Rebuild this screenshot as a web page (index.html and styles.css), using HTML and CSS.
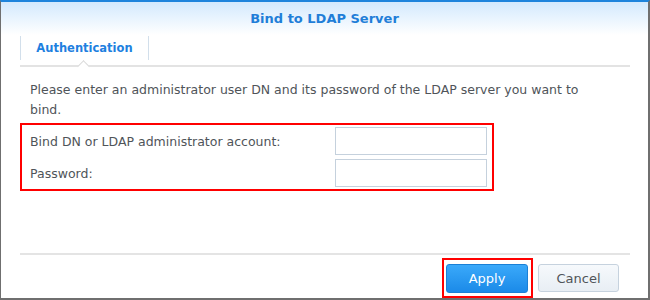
FILE: index.html
```html
<!DOCTYPE html>
<html lang="en">
<head>
    <meta charset="UTF-8">
    <meta name="viewport" content="width=device-width, initial-scale=1.0">
    <title>Bind to LDAP Server</title>
    <link rel="stylesheet" href="styles.css">
</head>
<body>
    <div class="dialog">
        <header class="dialog-header">
            <h1>Bind to LDAP Server</h1>
        </header>

        <div class="tabs">
            <div class="tab active">Authentication</div>
        </div>

        <div class="content">
            <p class="intro">Please enter an administrator user DN and its password of the LDAP server you want to bind.</p>

            <div class="fields highlight">
                <label for="binddn">Bind DN or LDAP administrator account:</label>
                <input type="text" id="binddn" name="binddn">
                <label for="password">Password:</label>
                <input type="password" id="password" name="password">
            </div>
        </div>

        <footer class="dialog-footer">
            <div class="highlight apply-wrap">
                <button type="button" class="btn btn-primary">Apply</button>
            </div>
            <button type="button" class="btn">Cancel</button>
        </footer>
    </div>
</body>
</html>
```

FILE: styles.css
```css
* {
    margin: 0;
    padding: 0;
    box-sizing: border-box;
    font-family: "DejaVu Sans", Verdana, sans-serif;
}

body {
    background-color: #fff;
    color: #4f5459;
}

.dialog {
    width: 650px;
    height: 300px;
    display: flex;
    flex-direction: column;
    border-top: 2px solid #1e84dc;
    border-left: 1px solid #6f6f6f;
    border-right: 2px solid #6f6f6f;
    border-bottom: 2px solid #6f6f6f;
    background-color: #fff;
}

.dialog-header {
    height: 33px;
    background: linear-gradient(to bottom, #d3e9fd, #ffffff);
    text-align: center;
}

.dialog-header h1 {
    font-size: 13px;
    font-weight: bold;
    color: #1f7ed8;
    line-height: 34px;
}

.tabs {
    display: flex;
    margin: 0 18px 0 19px;
    padding-top: 1px;
    border-bottom: 2px solid #e3e3e3;
    height: 32px;
}

.tab {
    position: relative;
    width: 129px;
    height: 24px;
    border-left: 1px solid #d2dfeb;
    border-right: 1px solid #d2dfeb;
    font-size: 11.5px;
    font-weight: bold;
    color: #1e80df;
    text-align: center;
    line-height: 24px;
}

/* little notch under the active tab */
.tab.active::after {
    content: "";
    position: absolute;
    left: 58px;
    bottom: -11px;
    width: 8px;
    height: 8px;
    background-color: #fff;
    border-top: 1px solid #d8d8d8;
    border-left: 1px solid #d8d8d8;
    transform: rotate(45deg);
}

.content {
    padding: 13px 18px 0 29px;
}

.intro {
    max-width: 580px;
    font-size: 12.5px;
    line-height: 20px;
    color: #4f5459;
}

.highlight {
    border: 2px solid #f00;
}

.fields {
    display: grid;
    grid-template-columns: 305px 152px;
    row-gap: 4px;
    align-items: center;
    width: fit-content;
    margin: 3px 0 0 -10px;
    padding: 2px 5px 2px 8px;
}

.fields label {
    font-size: 12.5px;
    color: #4f5459;
}

.fields input {
    height: 28px;
    border: 1px solid #c5d1dd;
    background-color: #fff;
    padding: 0 6px;
    font-size: 12px;
}

.dialog-footer {
    margin: auto 18px 0 19px;
    border-top: 2px solid #e4e4e4;
    display: flex;
    justify-content: flex-end;
    align-items: center;
    gap: 5px;
    padding: 3px 11px 0 0;
    height: 45px;
}

.apply-wrap {
    padding: 4px 3px 3px 2px;
}

.btn {
    width: 81px;
    height: 28px;
    border: 1px solid #c6d2de;
    border-radius: 3px;
    background: linear-gradient(to bottom, #f6f9fc, #e8eef4);
    color: #4f5459;
    font-size: 13px;
    cursor: pointer;
}

.btn-primary {
    width: 82px;
    height: 29px;
    border-color: #1a80d6;
    background: linear-gradient(to bottom, #3aa9fa, #1b8ae8);
    color: #fff;
}
```
